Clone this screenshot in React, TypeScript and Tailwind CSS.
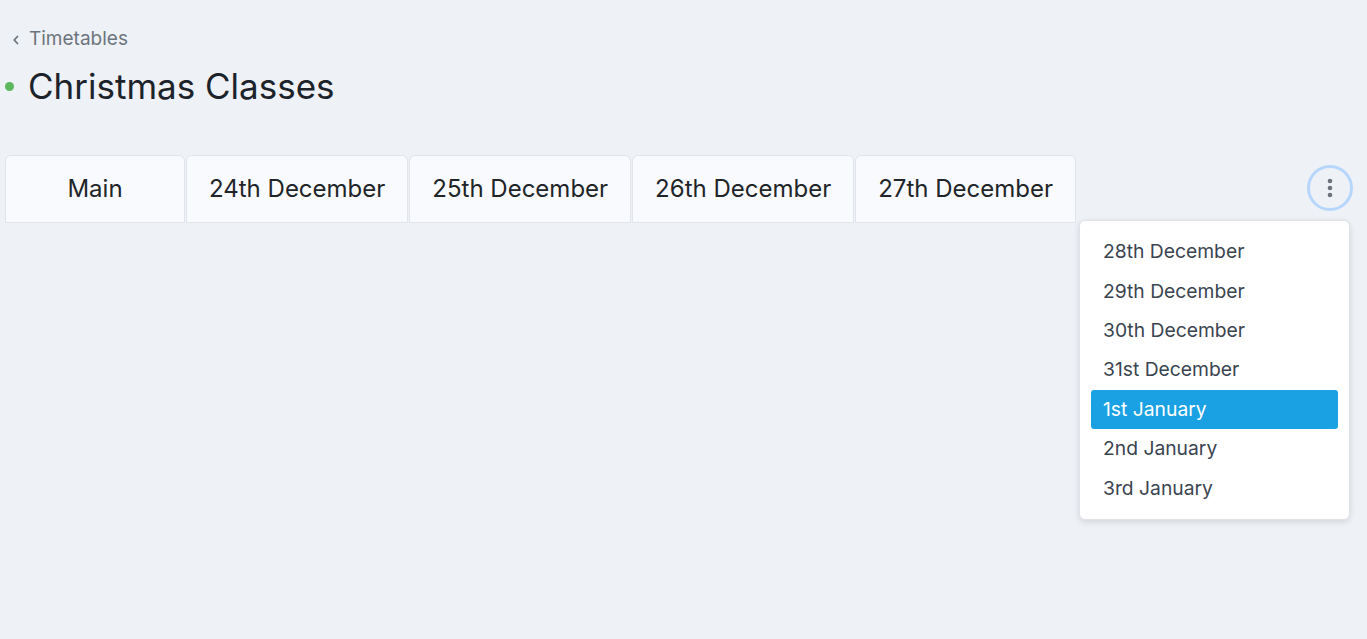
import React from 'react';

const tabs = ['Main', '24th December', '25th December', '26th December', '27th December'];
const more = [
  '28th December',
  '29th December',
  '30th December',
  '31st December',
  '1st January',
  '2nd January',
  '3rd January',
];

export default function App() {
  const active = '1st January';

  return (
    <div className="min-h-[639px] w-full bg-[#eef1f6] font-['Inter','Noto_Sans',sans-serif] text-[#212529]">
      <div className="pt-[26px]">
        <a className="flex items-center gap-[9px] pl-[12px] text-[19px] leading-[26px] text-[#6c757d]">
          <svg width="8" height="10" viewBox="0 0 8 10" className="mt-[1px]">
            <path d="M5.5 1.5 2.2 5l3.3 3.5" fill="none" stroke="#6c757d" strokeWidth="1.8" strokeLinecap="round" strokeLinejoin="round" />
          </svg>
          Timetables
        </a>
        <div className="mt-[12px] flex items-center gap-[14px] pl-[5px]">
          <span className="size-[9px] rounded-full bg-[#5cb85c]" />
          <h1 className="text-[35px] leading-[44px] font-normal text-[#1c232b]">Christmas Classes</h1>
        </div>
      </div>

      <div className="relative mt-[47px] flex items-start pl-[5px] pr-[14px]">
        <div className="flex gap-px">
          {tabs.map((t, i) => (
            <div
              key={t}
              className={`flex h-[68px] items-center justify-center rounded-t-[6px] border border-[#e1e4ea] bg-[#f9fafe] text-[24px] ${
                i === 0 ? 'w-[180px]' : 'px-[22px]'
              }`}
            >
              {t}
            </div>
          ))}
        </div>

        <div className="ml-auto mt-[10px]">
          <button className="flex size-[46px] items-center justify-center rounded-full border-[3px] border-[#b6d6fb]">
            <svg width="6" height="20" viewBox="0 0 6 20">
              <circle cx="3" cy="3" r="2.3" fill="#6c737d" />
              <circle cx="3" cy="10" r="2.3" fill="#6c737d" />
              <circle cx="3" cy="17" r="2.3" fill="#6c737d" />
            </svg>
          </button>
        </div>

        <div className="absolute right-[17px] top-[65px] w-[271px] rounded-[6px] border border-[#dfe2e8] bg-white px-[11px] py-[11px] shadow-[0_2px_6px_rgba(0,0,0,0.12)]">
          {more.map((m) => (
            <div
              key={m}
              className={`flex h-[39.4px] items-center rounded-[3px] px-[12px] text-[19.3px] ${
                m === active ? 'bg-[#1aa1e3] text-white' : 'text-[#3a4450]'
              }`}
            >
              {m}
            </div>
          ))}
        </div>
      </div>
    </div>
  );
}
